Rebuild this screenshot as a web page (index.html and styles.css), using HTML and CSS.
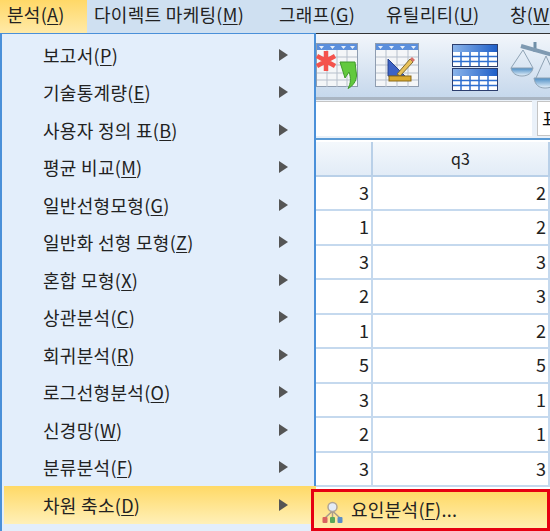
FILE: index.html
```html
<!DOCTYPE html>
<html>
<head>
    <meta charset="utf-8">
    <link rel="stylesheet" href="styles.css">
</head>
<body>

<div class="window">
    <div class="menubar">
        <div class="top-item top-active">분석(<u>A</u>)</div>
        <div class="top-item top-dm">다이렉트 마케팅(<u>M</u>)</div>
        <div class="top-item top-graph">그래프(<u>G</u>)</div>
        <div class="top-item top-util">유틸리티(<u>U</u>)</div>
        <div class="top-item top-win">창(<u>W</u>)</div>
    </div>

    <div class="toolbar">
        <svg class="tool tool-a" width="42" height="46" viewBox="0 0 42 46">
            <rect x="0.5" y="0.5" width="41" height="43" fill="#f4f6f8" stroke="#8f9db0"/>
            <rect x="1" y="1" width="40" height="6" fill="#5b8fdc"/>
            <path d="M3 3h5l-2.500 3zM14 3h5l-2.500 3zM25 3h5l-2.500 3zM34 3h5l-2.500 3z" fill="#e8f0fb"/>
            <path d="M11 7v37M21 7v37M31 7v37M1 14h40M1 22h40M1 30h40M1 37h40" stroke="#b7c0cc" fill="none"/>
            <path d="M10 8v20M1 13l18 10M19 13L1 23" stroke="#f4524c" stroke-width="4.500" fill="none"/>
            <path d="M24 19L39 19L40.500 32C40.500 38 37 43 32 45.500C35 40 35 35 33 29L29 35Z" fill="#62c93e" stroke="#3f9a2a"/>
        </svg>
        <svg class="tool tool-b" width="44" height="46" viewBox="0 0 44 46">
            <rect x="0.5" y="0.5" width="43" height="43" fill="#f4f6f8" stroke="#8f9db0"/>
            <rect x="1" y="1" width="42" height="6" fill="#5b8fdc"/>
            <path d="M3 3h5l-2.500 3zM14 3h5l-2.500 3zM25 3h5l-2.500 3zM36 3h5l-2.500 3z" fill="#e8f0fb"/>
            <path d="M11 7v37M22 7v37M33 7v37M1 14h42M1 22h42M1 30h42M1 37h42" stroke="#b7c0cc" fill="none"/>
            <path d="M13 16v17h17z" fill="#3d63c4" stroke="#24408c"/>
            <path d="M22 31l13-15 3 3-13 14z" fill="#e8c15a" stroke="#7d6a30"/>
            <path d="M35 16l2-2 3 3-2 2z" fill="#d8706a"/>
            <rect x="14" y="33" width="22" height="5" fill="#d9a92e" stroke="#8a6a18"/>
        </svg>
        <svg class="tool tool-c" width="46" height="48" viewBox="0 0 46 48">
            <defs>
                <linearGradient id="tableHead" x1="0" x2="1" y1="0" y2="0">
                    <stop offset="0" stop-color="#8ab4ea"/>
                    <stop offset="1" stop-color="#1f5fc8"/>
                </linearGradient>
            </defs>
            <rect x="0.5" y="1.500" width="45" height="22" fill="#fff" stroke="#2c3e6e"/>
            <rect x="1" y="2" width="44" height="7" fill="url(#tableHead)"/>
            <path d="M1 13.500h44M1 18.500h44M9 9v14M18 9v14M27 9v14M36 9v14" stroke="#2f6fd0" stroke-width="1.500" fill="none"/>
            <rect x="0.5" y="25.500" width="45" height="22" fill="#fff" stroke="#2c3e6e"/>
            <rect x="1" y="26" width="44" height="7" fill="url(#tableHead)"/>
            <path d="M1 37.500h44M1 42.500h44M9 33v14M18 33v14M27 33v14M36 33v14" stroke="#2f6fd0" stroke-width="1.500" fill="none"/>
        </svg>
        <svg class="tool tool-d" width="46" height="50" viewBox="0 0 46 50">
            <defs>
                <linearGradient id="pan" x1="0" x2="0" y1="0" y2="1">
                    <stop offset="0" stop-color="#4a8cc4"/>
                    <stop offset="1" stop-color="#e8f2fb"/>
                </linearGradient>
            </defs>
            <path d="M25 0v10" stroke="#6f8fa8" stroke-width="3"/>
            <path d="M11 4l35 10" stroke="#7f9ab2" stroke-width="4"/>
            <path d="M13 8L1 26M13 8l10 18M36 14L26 36M36 14l10 22" stroke="#8fa3b5" fill="none"/>
            <path d="M1 26h22c-1 5-5 8-11 8S2 31 1 26z" fill="url(#pan)" stroke="#8fa3b5"/>
            <path d="M24 36h22v3c-2 5-5 7-11 7s-10-3-11-10z" fill="url(#pan)" stroke="#8fa3b5"/>
        </svg>
    </div>

    <div class="formula-row">
        <div class="formula-input"></div>
        <div class="formula-label">표</div>
    </div>

    <div class="sheet">
        <div class="head"></div><div class="head">q3</div>
        <div class="cell">3</div><div class="cell">2</div>
        <div class="cell">1</div><div class="cell">2</div>
        <div class="cell">3</div><div class="cell">3</div>
        <div class="cell">2</div><div class="cell">3</div>
        <div class="cell">1</div><div class="cell">2</div>
        <div class="cell">5</div><div class="cell">5</div>
        <div class="cell">3</div><div class="cell">1</div>
        <div class="cell">2</div><div class="cell">1</div>
        <div class="cell">3</div><div class="cell">3</div>
    </div>

    <div class="menu">
        <div class="menu-item"><span>보고서(<u>P</u>)</span><i class="arrow"></i></div>
        <div class="menu-item"><span>기술통계량(<u>E</u>)</span><i class="arrow"></i></div>
        <div class="menu-item"><span>사용자 정의 표(<u>B</u>)</span><i class="arrow"></i></div>
        <div class="menu-item"><span>평균 비교(<u>M</u>)</span><i class="arrow"></i></div>
        <div class="menu-item"><span>일반선형모형(<u>G</u>)</span><i class="arrow"></i></div>
        <div class="menu-item"><span>일반화 선형 모형(<u>Z</u>)</span><i class="arrow"></i></div>
        <div class="menu-item"><span>혼합 모형(<u>X</u>)</span><i class="arrow"></i></div>
        <div class="menu-item"><span>상관분석(<u>C</u>)</span><i class="arrow"></i></div>
        <div class="menu-item"><span>회귀분석(<u>R</u>)</span><i class="arrow"></i></div>
        <div class="menu-item"><span>로그선형분석(<u>O</u>)</span><i class="arrow"></i></div>
        <div class="menu-item"><span>신경망(<u>W</u>)</span><i class="arrow"></i></div>
        <div class="menu-item"><span>분류분석(<u>F</u>)</span><i class="arrow"></i></div>
        <div class="menu-item selected"><span>차원 축소(<u>D</u>)</span><i class="arrow"></i></div>
    </div>

    <div class="submenu">
        <svg class="factor-icon" width="21" height="23" viewBox="0 0 21 23">
            <path d="M10.500 10L3 17M10.500 10v7M10.500 10L18 17" stroke="#a89c8c" stroke-width="1.500" fill="none"/>
            <circle cx="10.500" cy="6" r="4.500" fill="#e4ecf8" stroke="#b0a596" stroke-width="1.500"/>
            <rect x="0.5" y="16" width="5" height="6" rx="1" fill="#d9625f"/>
            <rect x="8" y="16" width="5" height="6" rx="1" fill="#5aa85a"/>
            <rect x="15.500" y="16" width="5" height="6" rx="1" fill="#5a8ec8"/>
        </svg>
        <span>요인분석(<u>F</u>)...</span>
    </div>
</div>

</body>
</html>
```

FILE: styles.css
```css
body {
    margin: 0;
    overflow: hidden;
}
u {
    text-underline-offset: 2px;
}
.window {
    position: relative;
    width: 550px;
    height: 531px;
    overflow: hidden;
    background-color: white;
    font-family: "Noto Sans CJK KR", "Noto Sans", sans-serif;
    font-size: 18px;
    letter-spacing: 0.3px;
    color: #222;
}

/* top menu */
.menubar {
    display: flex;
    height: 33px;
    background-color: #cfe0f1;
    white-space: nowrap;
    overflow: hidden;
}
.top-item {
    flex: none;
    line-height: 29px;
}
.top-active {
    width: 87px;
    padding-left: 7px;
    box-sizing: border-box;
    background: linear-gradient(#ffd867, #ffeaa8);
}
.top-dm {
    width: 185px;
    padding-left: 7px;
    box-sizing: border-box;
}
.top-graph {
    width: 107px;
    padding-left: 7px;
    box-sizing: border-box;
}
.top-util {
    width: 124px;
    padding-left: 7px;
    box-sizing: border-box;
}
.top-win {
    padding-left: 7px;
}

/* toolbar under the menu */
.toolbar {
    display: flex;
    align-items: flex-start;
    height: 63px;
    padding-left: 316px;
    border-top: 1px solid #333;
    border-bottom: 3px solid #a9b5c2;
    background: linear-gradient(#f2f6fb, #c6d8ec);
    overflow: hidden;
}
.tool {
    flex: none;
    margin-top: 9px;
}
.tool-b {
    margin-left: 17px;
}
.tool-c {
    margin-left: 33px;
}
.tool-d {
    margin-left: 12px;
    margin-top: 8px;
}

.formula-row {
    display: flex;
    height: 40px;
    padding-left: 316px;
    gap: 5px;
    background-color: #eaf1f9;
    border-bottom: 2px solid #5b9bd5;
    box-sizing: border-box;
}
.formula-input {
    flex: 1;
    margin-top: 1px;
    margin-bottom: 2px;
    background-color: white;
    border-top: 1px solid #c4c4c4;
}
.formula-label {
    width: 8px;
    margin-top: 1px;
    margin-bottom: 2px;
    padding-left: 4px;
    line-height: 32px;
    background-color: white;
    border: 1px solid #c4c4c4;
    border-right: none;
    color: #111;
    white-space: nowrap;
}

/* data grid */
.sheet {
    display: grid;
    grid-template-columns: 373px 177px;
    grid-auto-rows: 34.5px;
    padding-top: 2px;
}
.head {
    display: flex;
    align-items: center;
    justify-content: center;
    background: linear-gradient(#f4f8fc, #e2ecf7);
    border-right: 2px solid #b9d0e8;
    border-bottom: 2px solid #b9d0e8;
    box-sizing: border-box;
    font-size: 16px;
    letter-spacing: 0;
}
.cell {
    padding-right: 2px;
    line-height: 31px;
    text-align: right;
    border-right: 2px solid #c5d9ee;
    border-bottom: 2px solid #c5d9ee;
    box-sizing: border-box;
    font-size: 18px;
    letter-spacing: 0;
}

/* open dropdown */
.menu {
    position: absolute;
    left: 0;
    top: 33px;
    width: 316px;
    height: 498px;
    padding: 2px 0 0 4px;
    box-sizing: border-box;
    background-color: #e3eefb;
    border-left: 2px solid #4a90d9;
    border-top: 1px solid #4a90d9;
    border-right: 2px solid #4a90d9;
}
.menu-item {
    display: flex;
    align-items: center;
    justify-content: space-between;
    height: 37.5px;
    margin-left: -2px;
    margin-right: -2px;
    padding: 0 28px 0 39px;
}
.menu-item span {
    white-space: nowrap;
}
.selected {
    background: linear-gradient(#ffd966, #fff0b8);
}
.arrow {
    width: 0;
    height: 0;
    border-left: 9px solid #555;
    border-top: 6px solid transparent;
    border-bottom: 6px solid transparent;
}

/* flyout */
.submenu {
    position: absolute;
    left: 311px;
    top: 489px;
    width: 239px;
    height: 42px;
    display: flex;
    align-items: center;
    gap: 8px;
    padding: 4px 0 0 8px;
    box-sizing: border-box;
    background: linear-gradient(#ffd966, #ffeeb0);
    border: 3px solid #e60012;
    white-space: nowrap;
}
.submenu span {
    margin-top: -6px;
}
.factor-icon {
    flex: none;
}
```
